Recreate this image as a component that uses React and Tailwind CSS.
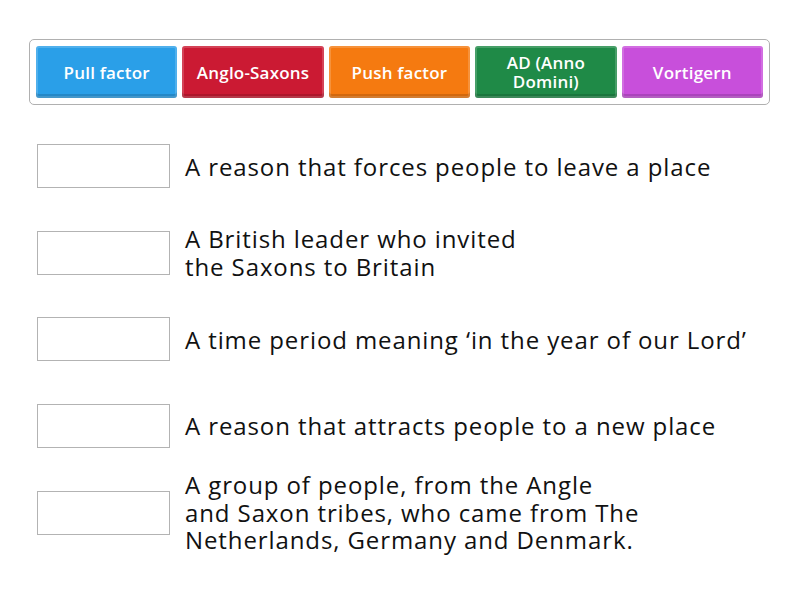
import { Fragment } from "react";

const chips = [
  { label: "Pull factor", bg: "bg-[#2a9fe8]" },
  { label: "Anglo-Saxons", bg: "bg-[#cb1a33]" },
  { label: "Push factor", bg: "bg-[#f57a10]" },
  { label: "AD (Anno Domini)", bg: "bg-[#1f8a47]", pad: "px-5" },
  { label: "Vortigern", bg: "bg-[#c84fdb]" },
];

const rows = [
  ["A reason that forces people to leave a place"],
  ["A British leader who invited", "the Saxons to Britain"],
  ["A time period meaning \u2018in the year of our Lord\u2019"],
  ["A reason that attracts people to a new place"],
  [
    "A group of people, from the Angle",
    "and Saxon tribes, who came from The",
    "Netherlands, Germany and Denmark.",
  ],
];

export default function App() {
  return (
    <div className="min-h-screen w-[800px] bg-white font-['Open_Sans','Noto_Sans',sans-serif] text-[#111]">
      {/* word bank */}
      <div className="pt-[39px] pl-[29px]">
        <div className="flex h-[66px] w-[741px] gap-[5px] rounded-[5px] border border-[#b0b0b0] p-[6px]">
          {chips.map((c) => (
            <div
              key={c.label}
              className={`${c.bg} ${c.pad || "px-1 whitespace-nowrap"} flex h-[52px] w-[142px] items-center justify-center rounded-[3px] text-center text-[17px] leading-[19px] font-semibold tracking-[0.2px] text-white shadow-[inset_0_-4px_0_rgba(0,0,0,0.14),inset_0_0_0_2px_rgba(255,255,255,0.18)]`}
            >
              {c.label}
            </div>
          ))}
        </div>
      </div>

      {/* answer rows */}
      <div className="mt-[18px]">
        {rows.map((lines, i) => (
          <div key={i} className="flex h-[86.6px] items-center">
            <div className="ml-[37px] h-[44px] w-[133px] shrink-0 border border-[#b3b3b3] bg-white" />
            <p className="ml-[15px] text-[24px] leading-[27.5px] tracking-[0.9px]">
              {lines.map((l, j) => (
                <Fragment key={j}>
                  {j > 0 && <br />}
                  {l}
                </Fragment>
              ))}
            </p>
          </div>
        ))}
      </div>
    </div>
  );
}
